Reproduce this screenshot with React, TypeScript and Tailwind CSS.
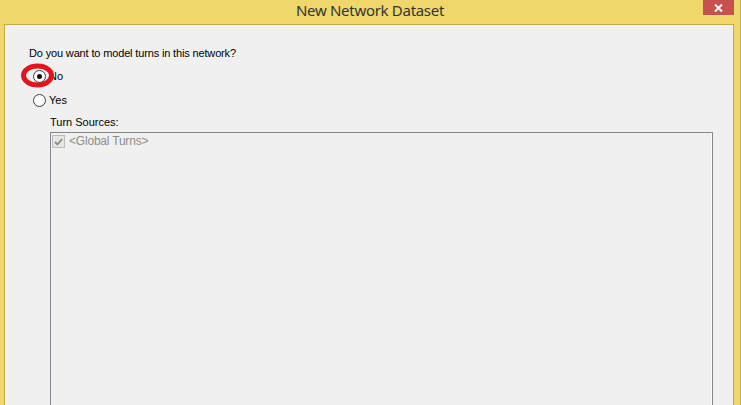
export default function App() {
  return (
    <div className="flex h-[405px] w-[741px] flex-col overflow-hidden border-r border-[#c9b358] bg-[#efd76b]">
      {/* title bar */}
      <div className="relative h-[24px] shrink-0">
        <div className="pt-[1px] text-center font-['Noto_Sans',sans-serif] text-[15px] leading-[19px] tracking-[-0.3px] text-[#333]">
          New Network Dataset
        </div>
        <button className="absolute right-[6px] top-0 flex h-[15px] w-[31px] items-center justify-center bg-[#c75050]">
          <svg width="9" height="8" viewBox="0 0 9 8">
            <path d="M1 0.5 L8 7.5 M8 0.5 L1 7.5" stroke="#fff" strokeWidth="2" />
          </svg>
        </button>
      </div>

      {/* client area */}
      <div className="ml-[4px] w-[730px] flex-1 border-x border-t border-[#c4ab45] bg-[#f0f0f0]">
        <div className="relative pl-[24px] pt-[22px] font-['Liberation_Sans',Arial,sans-serif] text-[11px] leading-[13px] text-black">
          <p className="h-[13px] tracking-[-0.15px]">Do you want to model turns in this network?</p>

          <label className="mt-[10px] ml-[4px] flex h-[13px] items-center gap-[3px]">
            <span className="flex h-[13px] w-[13px] items-center justify-center rounded-full border border-[#3c3c3c] bg-[#fff]">
              <span className="h-[5px] w-[5px] rounded-full bg-[#111]" />
            </span>
            <span>No</span>
          </label>

          <label className="mt-[11px] ml-[4px] flex h-[13px] items-center gap-[3px]">
            <span className="h-[13px] w-[13px] rounded-full border border-[#3c3c3c] bg-[#fff]" />
            <span>Yes</span>
          </label>

          <p className="mt-[9px] ml-[21px] h-[13px]">Turn Sources:</p>

          <div className="mt-[3px] ml-[21px] h-[290px] w-[663px] border border-[#828790] bg-[#f0f0f0] shadow-[inset_-1px_0_0_#fbfbfb]">
            <div className="ml-[1px] mt-[2px] flex h-[13px] items-center gap-[4px]">
              <span className="flex h-[13px] w-[13px] items-center justify-center border border-[#bcbcbc] bg-[#e6e6e6]">
                <svg width="9" height="8" viewBox="0 0 9 8">
                  <path d="M1 4 L3.5 6.5 L8 1" fill="none" stroke="#8a8a8a" strokeWidth="1.8" />
                </svg>
              </span>
              <span className="text-[12px] leading-[13px] tracking-[-0.2px] text-[#8d8d8d]">&lt;Global Turns&gt;</span>
            </div>
          </div>

          {/* red highlight around the selected radio */}
          <svg className="absolute left-[14px] top-[37px]" width="38" height="28" viewBox="0 0 38 28">
            <ellipse cx="18.5" cy="13.5" rx="14" ry="9.5" fill="none" stroke="#e2141c" strokeWidth="5" />
          </svg>
        </div>
      </div>
    </div>
  );
}
